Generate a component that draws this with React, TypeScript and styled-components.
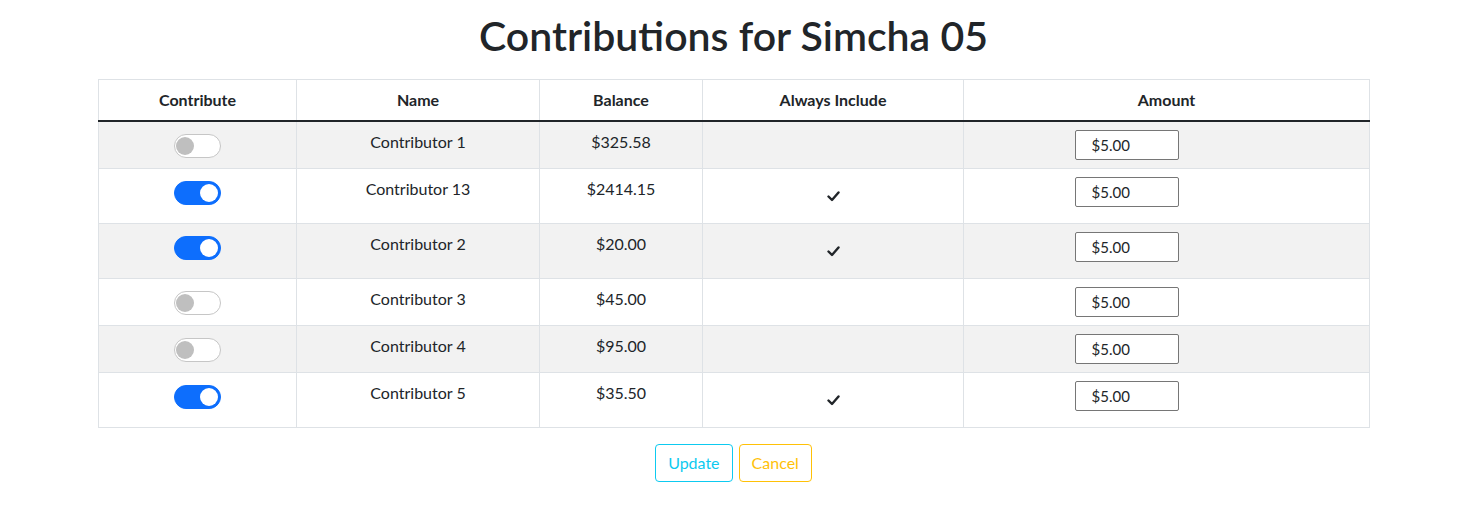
import styled, { createGlobalStyle } from "styled-components";
import { useState } from "react";

const GlobalStyle = createGlobalStyle`
  body {
    margin: 0;
    background: #fff;
    color: #212529;
    font-family: "Segoe UI", Lato, "Liberation Sans", sans-serif;
    font-size: 16px;
    line-height: 1.5;
  }
`;

const Page = styled.div`
  padding: 0 98px;
`;

const Title = styled.h1`
  margin: 11px 0 19px;
  text-align: center;
  font-size: 41px;
  font-weight: 600;
  line-height: 1.2;
  color: #212529;
`;

const Table = styled.table`
  width: 100%;
  table-layout: fixed;
  border-collapse: collapse;
  border: 1px solid #dee2e6;
`;

const HeadCell = styled.th<{ $w: number }>`
  box-sizing: border-box;
  width: ${(p) => p.$w}px;
  padding: 8px;
  text-align: center;
  font-weight: 700;
  border: 1px solid #dee2e6;
  border-bottom: 2px solid #212529;
`;

const Row = styled.tr<{ $striped: boolean }>`
  background: ${(p) => (p.$striped ? "#f2f2f2" : "#fff")};
`;

const Cell = styled.td<{ $padRight?: number }>`
  padding: 8px ${(p) => p.$padRight ?? 8}px 8px 8px;
  text-align: center;
  vertical-align: top;
  border: 1px solid #dee2e6;
`;

const Switch = styled.button<{ $on: boolean }>`
  position: relative;
  display: inline-block;
  width: 47px;
  height: 24px;
  margin-top: 4px;
  padding: 0;
  border-radius: 12px;
  border: 1px solid ${(p) => (p.$on ? "#0d6efd" : "#c6c6c6")};
  background: ${(p) => (p.$on ? "#0d6efd" : "#fff")};
  cursor: pointer;
  vertical-align: top;

  &::after {
    content: "";
    position: absolute;
    top: 2px;
    left: ${(p) => (p.$on ? "25px" : "1px")};
    width: 18px;
    height: 18px;
    border-radius: 50%;
    background: ${(p) => (p.$on ? "#fff" : "#bfbfbf")};
  }
`;

const CheckBox = styled.div`
  height: 38px;
  display: flex;
  align-items: center;
  justify-content: center;
`;

const AmountInput = styled.input`
  box-sizing: border-box;
  width: 104px;
  height: 30px;
  padding: 0 0 0 16px;
  border: 1px solid #767676;
  border-radius: 2px;
  background: #fff;
  color: #212529;
  font: inherit;
  font-size: 15px;
  vertical-align: top;
`;

const Actions = styled.div`
  display: flex;
  justify-content: center;
  gap: 6px;
  margin-top: 16px;
`;

const OutlineButton = styled.button<{ $color: string }>`
  height: 38px;
  padding: 0 12px;
  border: 1px solid ${(p) => p.$color};
  border-radius: 4px;
  background: transparent;
  color: ${(p) => p.$color};
  font: inherit;
  cursor: pointer;
`;

type Contributor = {
  name: string;
  balance: string;
  contribute: boolean;
  always: boolean;
};

const initial: Contributor[] = [
  { name: "Contributor 1", balance: "$325.58", contribute: false, always: false },
  { name: "Contributor 13", balance: "$2414.15", contribute: true, always: true },
  { name: "Contributor 2", balance: "$20.00", contribute: true, always: true },
  { name: "Contributor 3", balance: "$45.00", contribute: false, always: false },
  { name: "Contributor 4", balance: "$95.00", contribute: false, always: false },
  { name: "Contributor 5", balance: "$35.50", contribute: true, always: true },
];

function Check() {
  return (
    <svg width="13" height="11" viewBox="0 0 13 11">
      <polyline
        points="1.5,5.5 5,9 11.5,1.5"
        fill="none"
        stroke="#212529"
        strokeWidth="2.4"
        strokeLinecap="round"
        strokeLinejoin="round"
      />
    </svg>
  );
}

export default function App() {
  const [rows, setRows] = useState(initial);

  function toggle(i: number) {
    setRows(rows.map((r, idx) => (idx === i ? { ...r, contribute: !r.contribute } : r)));
  }

  return (
    <Page>
      <GlobalStyle />
      <Title>Contributions for Simcha 05</Title>
      <Table>
        <thead>
          <tr>
            <HeadCell $w={198}>Contribute</HeadCell>
            <HeadCell $w={243}>Name</HeadCell>
            <HeadCell $w={163}>Balance</HeadCell>
            <HeadCell $w={261}>Always Include</HeadCell>
            <HeadCell $w={406}>Amount</HeadCell>
          </tr>
        </thead>
        <tbody>
          {rows.map((r, i) => (
            <Row key={r.name} $striped={i % 2 === 0}>
              <Cell>
                <Switch $on={r.contribute} onClick={() => toggle(i)} aria-label="Contribute" />
              </Cell>
              <Cell>{r.name}</Cell>
              <Cell>{r.balance}</Cell>
              <Cell>{r.always && <CheckBox><Check /></CheckBox>}</Cell>
              <Cell $padRight={88}>
                <AmountInput defaultValue="$5.00" />
              </Cell>
            </Row>
          ))}
        </tbody>
      </Table>
      <Actions>
        <OutlineButton $color="#0dcaf0">Update</OutlineButton>
        <OutlineButton $color="#ffc107">Cancel</OutlineButton>
      </Actions>
    </Page>
  );
}
